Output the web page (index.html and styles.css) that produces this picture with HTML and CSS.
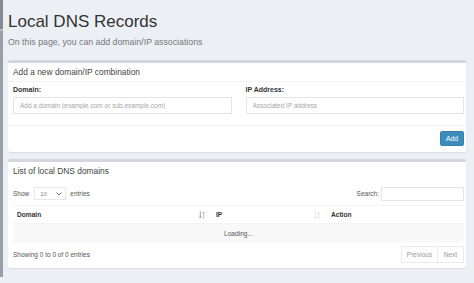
FILE: index.html
```html
<!DOCTYPE html>
<html>
<head>
<meta charset="utf-8">
<link rel="stylesheet" href="styles.css">
</head>
<body>
<div class="strip"></div>
<div class="content">
  <header class="page-head">
    <h1>Local DNS Records</h1>
    <p class="sub">On this page, you can add domain/IP associations</p>
  </header>

  <section class="box box1">
    <div class="box-head">Add a new domain/IP combination</div>
    <div class="box-body form-row">
      <div class="field">
        <label>Domain:</label>
        <input class="input" type="text" placeholder="Add a domain (example.com or sub.example.com)">
      </div>
      <div class="field">
        <label>IP Address:</label>
        <input class="input" type="text" placeholder="Associated IP address">
      </div>
    </div>
    <div class="box-foot">
      <button class="btn">Add</button>
    </div>
  </section>

  <section class="box box2">
    <div class="box-head plain">List of local DNS domains</div>
    <div class="box-body dt">
      <div class="dt-top">
        <div class="len">Show <span class="select">10 <svg width="6" height="4" viewBox="0 0 6 4"><path d="M0.5 0.5 L3 3 L5.5 0.5" fill="none" stroke="#666" stroke-width="0.9"/></svg></span> entries</div>
        <div class="search">Search: <span class="search-box"></span></div>
      </div>
      <table class="tbl">
        <thead>
          <tr>
            <th class="c1">Domain<svg class="sort" width="6" height="8" viewBox="0 0 6 8"><path d="M1.3 0 V7 M0 5.6 L1.3 7 L2.6 5.6" fill="none" stroke="#9a9fa4" stroke-width="0.9"/><path d="M4.7 8 V1 M3.4 2.4 L4.7 1 L6 2.4" fill="none" stroke="#b5b9bd" stroke-width="0.9"/></svg></th>
            <th class="c2">IP<svg class="sort" width="6" height="8" viewBox="0 0 6 8"><path d="M1.3 0 V7 M0 5.6 L1.3 7 L2.6 5.6" fill="none" stroke="#dcdfe2" stroke-width="0.9"/><path d="M4.7 8 V1 M3.4 2.4 L4.7 1 L6 2.4" fill="none" stroke="#dcdfe2" stroke-width="0.9"/></svg></th>
            <th class="c3">Action</th>
          </tr>
        </thead>
        <tbody>
          <tr class="odd"><td colspan="3" class="loading">Loading...</td></tr>
        </tbody>
      </table>
      <div class="dt-bottom">
        <div class="info">Showing 0 to 0 of 0 entries</div>
        <div class="pager"><span class="pg">Previous</span><span class="pg">Next</span></div>
      </div>
    </div>
  </section>
</div>
</body>
</html>
```
FILE: styles.css
```css
html, body {
  margin: 0;
  padding: 0;
  height: 100%;
}
body {
  background: #ecf0f5;
  font-family: "Liberation Sans", Arial, sans-serif;
  color: #333;
  display: flex;
}
.strip {
  width: 3px;
  flex: none;
  background: linear-gradient(#868b91 0 29px, #b4b8bd 29px 31px, #9a9fa5 31px);
  height: 277px;
}
.content {
  flex: 1;
  padding: 0 8px 0 5px;
}
.page-head {
  padding-top: 12px;
  height: 60px;
  box-sizing: border-box;
}
h1 {
  margin: 0;
  font-size: 17px;
  font-weight: 400;
  line-height: 19px;
  color: #333;
}
.sub {
  margin: 6px 0 0;
  font-size: 8.75px;
  line-height: 10px;
  color: #777;
}
.box {
  background: #fff;
  border-top: 3px solid #d2d6de;
  border-radius: 2px;
  box-shadow: 0 1px 1px rgba(0,0,0,0.08);
  box-sizing: border-box;
}
.box1 {
  height: 92px;
  margin-bottom: 7px;
}
.box-head {
  height: 19px;
  box-sizing: border-box;
  padding: 0 5px;
  font-size: 8.4px;
  line-height: 19px;
  color: #444;
  border-bottom: 1px solid #f2f2f2;
}
.box-head.plain {
  border-bottom: none;
  height: 18px;
  line-height: 18px;
}
.form-row {
  display: grid;
  grid-template-columns: 1fr 1fr;
  column-gap: 14px;
  padding: 4px 2px 11px 5px;
}
.field label {
  display: block;
  font-size: 7px;
  font-weight: 700;
  line-height: 8px;
  margin-bottom: 3px;
  color: #333;
}
.input {
  display: block;
  width: 100%;
  box-sizing: border-box;
  height: 17px;
  border: 1px solid #e3e5e8;
  padding: 0 6px;
  font-family: "Liberation Sans", Arial, sans-serif;
  font-size: 6.5px;
  color: #555;
  outline: none;
}
.input::placeholder {
  color: #a6a6a6;
}
.box-foot {
  border-top: 1px solid #f2f2f2;
  padding: 5px 2px 5px 5px;
  display: flex;
  justify-content: flex-end;
}
.btn {
  background: #3c8dbc;
  border: 1px solid #367fa9;
  border-radius: 2px;
  color: #fff;
  font-family: "Liberation Sans", Arial, sans-serif;
  font-size: 6.8px;
  height: 15px;
  width: 24px;
  padding: 0;
}
.box2 {
  height: 109px;
}
.dt {
  padding: 7px 2px 0 5px;
}
.dt-top {
  display: flex;
  justify-content: space-between;
  align-items: center;
  font-size: 6.5px;
  color: #555;
  height: 13px;
}
.len {
  display: flex;
  align-items: center;
}
.select {
  display: inline-flex;
  align-items: center;
  justify-content: space-between;
  width: 32px;
  height: 13px;
  box-sizing: border-box;
  border: 1px solid #e6e8eb;
  margin: 0 4px 0 5px;
  padding: 0 3px 0 5px;
  font-size: 6px;
  color: #888;
}
.search {
  display: flex;
  align-items: center;
}
.search-box {
  display: inline-block;
  width: 83px;
  height: 14px;
  box-sizing: border-box;
  border: 1px solid #e3e5e8;
  margin-left: 2px;
}
.tbl {
  width: 100%;
  border-collapse: collapse;
  margin-top: 5px;
  font-size: 6.6px;
}
.tbl th {
  text-align: left;
  font-weight: 700;
  height: 17px;
  padding: 0 4px;
  border-top: 1px solid #f4f4f4;
  position: relative;
  color: #333;
}
.tbl th.c1 { width: 191px; }
.tbl th.c2 { width: 107px; }
.sort {
  position: absolute;
  right: 7px;
  top: 5px;
}
.tbl td {
  height: 19px;
  padding: 0 4px;
  border-top: 1px solid #f4f4f4;
}
.tbl tr.odd td {
  background: #f9f9f9;
}
.loading {
  text-align: center;
  color: #555;
}
.dt-bottom {
  display: flex;
  justify-content: space-between;
  align-items: center;
  margin-top: 3px;
  font-size: 6.5px;
  color: #555;
}
.pager {
  display: flex;
}
.pg {
  display: inline-flex;
  align-items: center;
  justify-content: center;
  height: 17px;
  box-sizing: border-box;
  border: 1px solid #e8eaed;
  color: #999;
  background: #fff;
}
.pg + .pg {
  border-left: none;
}
.pg:first-child { width: 37px; }
.pg:last-child { width: 26px; }
```
